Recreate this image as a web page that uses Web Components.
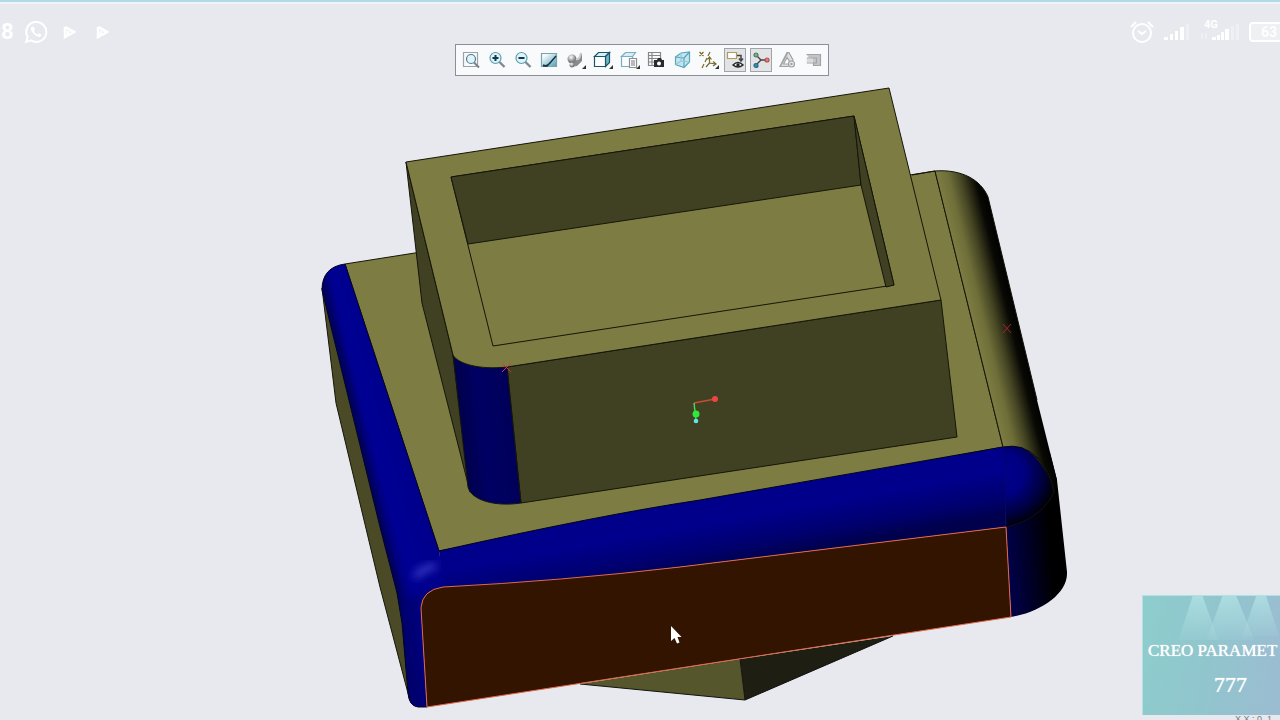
<!DOCTYPE html>
<html lang="en">
<head>
<meta charset="utf-8">
<meta name="viewport" content="width=device-width, initial-scale=1">
<title>Model view</title>
<style>
html, body { margin: 0; background: #e8e9ee; font-family: "Liberation Sans", Arial, sans-serif; }
</style>
</head>
<body>
<cad-viewport>
  <status-bar></status-bar>
  <view-toolbar></view-toolbar>
  <cad-scene slot="scene"></cad-scene>
  <channel-badge slot="badge"></channel-badge>
</cad-viewport>

<template id="t-viewport">
<style>
:host { display: grid; position: relative; height: 100vh; overflow: hidden; background: #e8e9ee; }
.scene, .chrome { grid-area: 1 / 1; min-width: 0; }
.chrome { display: flex; flex-direction: column; min-height: 0; z-index: 1; }
.corner { margin-top: auto; align-self: flex-end; }
</style>
<div class="scene"><slot name="scene"></slot></div>
<div class="chrome"><slot></slot><div class="corner"><slot name="badge"></slot></div></div>
</template>

<template id="t-status">
<style>
:host { display: flex; align-items: flex-start; justify-content: space-between; height: 42px; border-top: 2px solid #b4d9e8; box-shadow: inset 0 2px #edf3f8; color: #fff; overflow: hidden; }
div { display: flex; align-items: center; height: 24px; padding-top: 18px; }
.left { gap: 10px; padding-left: 1px; }
.left b { font: 700 22px/24px Roboto, sans-serif; }
.right { gap: 9px; }
svg { display: block; flex: none; }
.plays { gap: 20px; padding: 0 0 0 5px; }
.net { position: relative; }
.net small { position: absolute; left: 4px; top: -1px; font: 700 11px/12px Roboto, sans-serif; }
.battery { box-sizing: border-box; width: 40px; height: 20px; margin-right: -9px; padding: 0; justify-content: center; border: 2px solid #fff; border-radius: 4px; background: #eff0f3; font: 700 14px/16px Roboto, sans-serif; }
</style>
<div class="left">
  <b>8</b>
  <svg width="24" height="24" viewBox="0 0 24 24" fill="none" stroke="#fff" stroke-width="2"><path d="M2 22l1.700-5A10 10 0 1 1 7 20.400z"/><path d="M8 6.500c-2 1-1.500 4 1.500 7s6 4.500 7.500 2.500c.8-1 .4-1.600-.6-2.100l-1.500-.7-1.500 1.300c-1.800-.8-2.800-1.900-3.500-3.400l1-1.400-1-2.600z" fill="#fff" stroke="none"/></svg>
  <div class="plays">
    <svg width="13" height="14" viewBox="0 0 13 14"><path d="M2 2l9 5-5 3M2 2v10l3-2V6" fill="none" stroke="#fff" stroke-width="2.600"/></svg>
    <svg width="13" height="14" viewBox="0 0 13 14"><path d="M2 2l9 5-5 3M2 2v10l3-2V6" fill="none" stroke="#fff" stroke-width="2.600"/></svg>
  </div>
</div>
<div class="right">
  <svg width="24" height="24" viewBox="0 0 24 24" fill="none" stroke="#fff" stroke-width="2"><circle cx="12" cy="13" r="9"/><path d="M8 11l4 3 4-3M1 7l5-5M23 7l-5-5"/></svg>
  <svg width="28" height="20" viewBox="0 0 28 20" fill="#fff"><path d="M1 15h4v3H1zM7 12h3v6H7zM12 9h3v9h-3zM17 5h4v13h-4z"/><path d="M23 2h3v16h-3z" opacity=".35"/></svg>
  <div class="net" style="padding:0">
    <small>4G</small>
    <svg width="40" height="24" viewBox="0 0 40 24" fill="#fff"><path d="M12 17h4v3h-4zM17 15h3v5h-3zM21 12h3v8h-3zM25 9h4v11h-4z"/><path d="M31 6h3v14h-3zM36 4h3v16h-3zM1 13h2v6H1zM5 13h2v6H5z" opacity=".35"/></svg>
  </div>
  <div class="battery">63</div>
</div>
</template>

<template id="t-tool">
<style>
:host { display: block; flex: none; }
button { display: flex; align-items: center; justify-content: center; position: relative; box-sizing: border-box; width: 22px; height: 24px; margin: 0; padding: 0; border: 1px solid transparent; background: none; }
:host([pressed]) button { background: #e2e3e6; border-color: #a2a5a8; }
:host([flyout]) { padding-right: 1px; }
:host([flyout]) button::after { content: ""; position: absolute; right: -1px; bottom: 2px; border: 2px solid transparent; border-right-color: #333; border-bottom-color: #333; }
</style>
<button type="button"><slot></slot></button>
</template>

<template id="t-toolbar">
<style>
:host { display: flex; justify-content: center; padding-left: 4px; }
.bar { display: flex; align-items: center; gap: 4px; box-sizing: border-box; height: 32px; padding: 0 4px; border: 1px solid #8c9094; background: #f9fafc; }
svg { display: block; width: 20px; height: 20px; fill: none; stroke-width: 1.200; }
</style>
<div class="bar" role="toolbar" aria-label="View">
  <tool-button label="Refit"><svg viewBox="0 0 20 20"><path d="M2.500 2.500h14v14h-14z" stroke="#9aa3a8"/><circle cx="10" cy="9" r="4.500" stroke="#497f91" fill="#e3f3f7"/><path d="M13 12.500l5 5" stroke="#75838a" stroke-width="2"/></svg></tool-button>
  <tool-button label="Zoom in"><svg viewBox="0 0 20 20"><circle cx="8.500" cy="8" r="5.500" stroke="#5ba0b3" fill="#dff3f8"/><path d="M8.500 5v6M5.500 8h6" stroke="#14384a" stroke-width="2"/><path d="M12.500 12l5 5" stroke="#7e8b91" stroke-width="2.400"/></svg></tool-button>
  <tool-button label="Zoom out"><svg viewBox="0 0 20 20"><circle cx="8.500" cy="8" r="5.500" stroke="#5ba0b3" fill="#dff3f8"/><path d="M5.500 8h6" stroke="#14384a" stroke-width="2"/><path d="M12.500 12l5 5" stroke="#7e8b91" stroke-width="2.400"/></svg></tool-button>
  <tool-button label="Repaint"><svg viewBox="0 0 20 20"><defs><linearGradient id="rp" x2="1" y2="1"><stop offset=".2" stop-color="#f2fafc"/><stop offset="1" stop-color="#4f9db3"/></linearGradient></defs><path d="M2.500 3.500h15v13h-15z" fill="url(#rp)" stroke="#7ea3b0"/><path d="M4 15q4 2 7-2l6-7" stroke="#123442" stroke-width="1.500"/><path d="M4 16h5" stroke="#123442"/></svg></tool-button>
  <tool-button flyout label="Display style"><svg viewBox="0 0 20 20"><defs><radialGradient id="g" cx=".4" cy=".3"><stop stop-color="#fff"/><stop offset="1" stop-color="#808080"/></radialGradient></defs><path d="M8 9l4 1 5-7v8l-5 5-6 1z" fill="#8b8b8b"/><circle cx="7" cy="9" r="4.500" fill="url(#g)"/><circle cx="7" cy="15" r="2.500" fill="url(#g)"/><path d="M11 9c3 1 4-2 5-6" stroke="#ccc" stroke-width="2"/></svg></tool-button>
  <tool-button flyout label="Saved orientations"><svg viewBox="0 0 20 20" stroke="#17566b" stroke-width="1.400"><path d="M2.500 6.500l4-4h11l-4 4z" fill="#d6eff5"/><path d="M13.500 6.500l4-4v10l-4 4z" fill="#75b6c7"/><path d="M2.500 6.500h11v10h-11z" fill="#fff"/></svg></tool-button>
  <tool-button flyout label="View manager"><svg viewBox="0 0 20 20"><path d="M2.500 6.500l4-4h10l-3 4z" fill="#d7edf3" stroke="#79afbe"/><path d="M2.500 6.500h11v10h-11z" fill="#f9fdff" stroke="#79afbe"/><path d="M10.500 8.500h7v9h-7z" fill="#fff" stroke="#8b8f92"/><path d="M12 11h4M12 13h4M12 15h4" stroke="#777"/></svg></tool-button>
  <tool-button label="Capture view"><svg viewBox="0 0 20 20"><path d="M2.500 2.500h12v13h-12zM2.500 5.500h12M2.500 8.500h12M2.500 12h12M6 3v12" stroke="#85898b"/><path d="M8 10h3l1-2h3l1 2h2v7H8z" fill="#292c2e"/><circle cx="13" cy="13.500" r="2" fill="#fff"/></svg></tool-button>
  <tool-button label="Perspective view"><svg viewBox="0 0 20 20" stroke="#5aa7bd"><path d="M3.500 7L9 3l8.500-1v10L12 17.500l-8.500-3z" fill="#c3e5ee"/><path d="M3.500 7l8.500 1 5.500-6M12 8v9.500" /><path d="M9 3v8l8.500 1M9 11l-5.500 3.500" stroke="#93c9d8"/></svg></tool-button>
  <tool-button flyout label="Datum display"><svg viewBox="0 0 20 20" stroke="#796a2d" stroke-width="1.600"><path d="M1.500 2l4 4M5.500 2l-4 4M12 2l-2 4M9 8l-2 4M6 14l-2 4M11.500 7.500v5.500l6 1M11.500 13L8 17M9.500 9.500l2-2.500 2 2.500M15 11.500l3 2.500-3 2"/></svg></tool-button>
  <tool-button pressed label="Annotation display"><svg viewBox="0 0 20 20"><path d="M2.500 2.500h9v6h-9z" fill="#fff" stroke="#b09b5b"/><path d="M12 5.500h4v5M14 8.500l2 2.500 2-2.500" stroke="#444" stroke-width="1.500"/><path d="M8 15q5-5 10 0-5 4-10 0z" fill="#fff" stroke="#252525" stroke-width="1.400"/><circle cx="13" cy="15" r="1.700" fill="#222"/></svg></tool-button>
  <tool-button pressed label="Spin center"><svg viewBox="0 0 20 20"><path d="M5 5l5 5h6M10 10l-5 5" stroke="#444" stroke-width="1.400"/><circle cx="5" cy="5" r="2" fill="#7eac8c" stroke="#4e7b5d"/><circle cx="16" cy="10" r="2" fill="#d77e7e" stroke="#b95050"/><circle cx="5" cy="15.500" r="2" fill="#388ca8" stroke="#246c85"/></svg></tool-button>
  <tool-button label="Simulate"><svg viewBox="0 0 20 20" stroke="#a0a3a6"><path d="M3 16.500h8L16 10l-4-7.500h-2z" fill="#dedfe0"/><path d="M6.500 14L10 7.500l4 6.500z" fill="#fff"/><path d="M3 16.500L11 2.500" /><circle cx="14.500" cy="14" r="3" fill="#eee"/><path d="M13.500 12.500l3 1.500-3 1.500z" fill="#999" stroke="none"/></svg></tool-button>
  <tool-button label="Section"><svg viewBox="0 0 20 20"><path d="M3.500 4.500h14v11h-7v-2.500h-6V8h9v5h-3" fill="#c3c5c7" stroke="#a2a5a8"/><path d="M4 8.500h6v4H4z" fill="#d9dbdd"/></svg></tool-button>
</div>
</template>

<template id="t-scene">
<style>
:host { display: block; }
svg { display: block; width: 100%; height: auto; }
</style>
<svg viewBox="0 0 1280 720" role="img" aria-label="Solid part with rounded edges">
  <defs>
    <linearGradient id="olive" gradientUnits="userSpaceOnUse" x1="969" y1="309" x2="1014" y2="298"><stop stop-color="#7d7c42"/><stop offset=".25" stop-color="#6e6e39"/><stop offset=".5" stop-color="#464624"/><stop offset=".8" stop-color="#080804"/><stop offset="1" stop-color="#000"/></linearGradient>
    <linearGradient id="left" gradientUnits="userSpaceOnUse" x1="345" y1="430" x2="403" y2="414"><stop stop-color="#000074"/><stop offset=".4" stop-color="#000094"/><stop offset="1" stop-color="#00008a"/></linearGradient>
    <linearGradient id="front" gradientUnits="userSpaceOnUse" x1="720" y1="497" x2="732" y2="564"><stop stop-color="#00008a"/><stop offset=".35" stop-color="#00008c"/><stop offset=".75" stop-color="#00006e"/><stop offset="1" stop-color="#00004c"/></linearGradient>
    <radialGradient id="ball" gradientUnits="userSpaceOnUse" cx="1002" cy="474" r="54"><stop stop-color="#00008e"/><stop offset=".4" stop-color="#000082"/><stop offset=".75" stop-color="#000040"/><stop offset="1" stop-color="#000004"/></radialGradient>
    <linearGradient id="end" gradientUnits="userSpaceOnUse" x1="1006" y1="570" x2="1052" y2="566"><stop stop-color="#00004e"/><stop offset=".5" stop-color="#000028"/><stop offset="1" stop-color="#000"/></linearGradient>
    <linearGradient id="boss" gradientUnits="userSpaceOnUse" x1="460" y1="430" x2="516" y2="424"><stop stop-color="#00004a"/><stop offset=".4" stop-color="#000064"/><stop offset="1" stop-color="#000058"/></linearGradient>
    <filter id="soft" x="-50%" y="-50%" width="200%" height="200%"><feGaussianBlur stdDeviation="4"/></filter>
    <clipPath id="leftclip"><path d="M322 290Q322 267 345 264L439 551L445 587Q421 590 421 608L427 707H418Q409 706 408 693L402 623L397 593L380 527Z"/></clipPath>
  </defs>
  <g stroke-linejoin="round">
    <path d="M580 684L740 659L745 700Z" fill="#55562c"/>
    <path d="M740 659L893 636L745 700Z" fill="#1e1e12"/>
    <path d="M580 684L745 700L893 636M740 659L745 700" fill="none" stroke="#111"/>
    <path d="M322 288L336 403L380 587L409 697L430 600Z" fill="#4a4b26" stroke="#15150b"/>
    <path d="M345 264L935 171L1003 447L439 551Z" fill="#7d7c42" stroke="#15150b"/>
    <path d="M1006 527L1030 495L1050 453L1057 480L1067 572C1068 594 1040 612 1011 617Z" fill="url(#end)"/>
    <path d="M935 171C962 169 981 180 988 197L1037 400L1057 480L1054 495L1003 447Z" fill="url(#olive)"/>
    <path d="M912 175L935 171C962 169 981 180 988 197L1037 400M935 171L1003 447" fill="none" stroke="#15150b"/>
    <path d="M1003 447C1022 443 1040 452 1054 492C1045 512 1025 523 1006 527Z" fill="url(#ball)"/>
    <path d="M1037 457Q1050 470 1054 492C1045 512 1025 523 1006 527" fill="none" stroke="#11110f"/>
    <path d="M439 551Q600 515 700 500L1004 447L1006 527L680 567Q560 582 443 588Z" fill="url(#front)"/>
    <path d="M439 551Q600 515 700 500L1003 447Q1024 443 1037 458" fill="none" stroke="#03031a"/>
    <path d="M1004 447L1006 527" stroke="#050567"/>
    <path d="M322 290Q322 267 345 264L439 551L445 587Q421 590 421 608L427 707H418Q409 706 408 693L402 623L397 593L380 527Z" fill="url(#left)"/>
    <g clip-path="url(#leftclip)">
      <path d="M320 275L380 527L397 593L408 720" fill="none" stroke="#000036" stroke-width="6" filter="url(#soft)"/>
      <path d="M398 600L445 587L421 608L427 710H406Z" fill="#000070" opacity=".7" filter="url(#soft)"/>
      <path d="M415 577Q424 567 436 566" fill="none" stroke="#4040cc" stroke-width="6" filter="url(#soft)"/>
    </g>
    <path d="M322 290Q322 267 345 264L439 551M322 290L380 527L397 593L402 623L408 693Q409 706 418 707H427" fill="none" stroke="#050526"/>
    <path d="M427 707L421 608Q422 590 443 587Q560 581 680 567L1006 527L1011 617Z" fill="#331400" stroke="#e3684a"/>
  </g>
  <g stroke="#15150b" stroke-linejoin="round">
    <path d="M406 162L422 303L467 480L470 492L453 355Z" fill="#404122"/>
    <path d="M507 367L941 300L957 437L521 503Z" fill="#404122"/>
    <path d="M453 355C458 364 480 370 507 367L521 503C495 507 471 500 468 487Z" fill="url(#boss)"/>
    <path d="M406 162L889 88L941 300L507 367C480 370 458 364 453 355Z" fill="#7d7c42"/>
    <path d="M451 177L854 116L894 285L493 346Z" fill="#7d7c42"/>
    <path d="M451 177L854 116L861 185L468 244Z" fill="#404122"/>
    <path d="M854 116L894 285L886 287L861 185Z" fill="#404122"/>
  </g>
  <path d="M502 363L511 372M511 363L502 372" stroke="#d8364a"/>
  <path d="M1003 324L1011 333M1011 324L1003 333" stroke="#a3242c"/>
  <g><path d="M694 403L715 399" stroke="#c84c36" stroke-width="1.500"/><path d="M694 403L696 420" stroke="#46d45a" stroke-width="1.500"/><circle cx="715" cy="399" r="3" fill="#ee4444"/><circle cx="696" cy="414" r="3.500" fill="#2ee83c"/><circle cx="696" cy="421" r="2.300" fill="#5de8e8"/></g>
  <path d="M671 626V641L674.500 638L677 643.500L679.500 642.500L677.500 637H681.500Z" fill="#fff"/>
</svg>
</template>

<template id="t-badge">
<style>
:host { display: flex; flex-direction: column; width: 138px; color: #fff; }
.art { display: grid; grid-template-columns: minmax(0, 1fr); height: 120px; overflow: hidden; background: linear-gradient(100deg, #8dcdcd, #91c5cd 50%, #9cbcd2); border: solid #b5e0e2; border-width: 1px 0 0 1px; box-sizing: border-box; }
.art > * { grid-area: 1 / 1; }
svg { width: 100%; height: 48px; }
.title { align-self: end; padding: 0 0 13px 5px; font: 17px/34px "Liberation Serif", serif; text-shadow: 0 0 1px #fff; white-space: nowrap; }
.title span { display: block; }
.title .num { padding-left: 33px; text-align: center; font-size: 22px; }
.note { height: 5px; overflow: hidden; padding-right: 8px; text-align: right; color: #777b80; font: 9px/9px "Liberation Sans", sans-serif; white-space: pre; }
</style>
<div class="art">
  <svg viewBox="0 0 138 48" preserveAspectRatio="none"><defs><linearGradient id="ray" x2="0" y2="1"><stop stop-color="#b1e2e5" stop-opacity=".8"/><stop offset="1" stop-color="#b1e2e5" stop-opacity=".1"/></linearGradient></defs><g fill="url(#ray)"><path d="M50 0H60L76 44H36Z"/><path d="M80 0H94L112 44H64Z"/><path d="M114 0H124L137 40H100Z"/></g></svg>
  <div class="title"><span>CREO PARAMET</span><span class="num">777</span></div>
</div>
<div class="note">X X : 0 .1</div>
</template>

<script>
const define = (name, templateId, setup) => {
  customElements.define(name, class extends HTMLElement {
    constructor() {
      super();
      const root = this.attachShadow({ mode: "open" });
      root.append(document.getElementById(templateId).content.cloneNode(true));
    }
    connectedCallback() { if (setup) setup(this, this.shadowRoot); }
  });
};
define("tool-button", "t-tool", (host, root) => {
  const button = root.querySelector("button");
  button.setAttribute("aria-label", host.getAttribute("label"));
  if (host.hasAttribute("pressed")) button.setAttribute("aria-pressed", "true");
});
define("view-toolbar", "t-toolbar");
define("status-bar", "t-status");
define("cad-scene", "t-scene");
define("channel-badge", "t-badge");
define("cad-viewport", "t-viewport");
</script>
</body>
</html>
